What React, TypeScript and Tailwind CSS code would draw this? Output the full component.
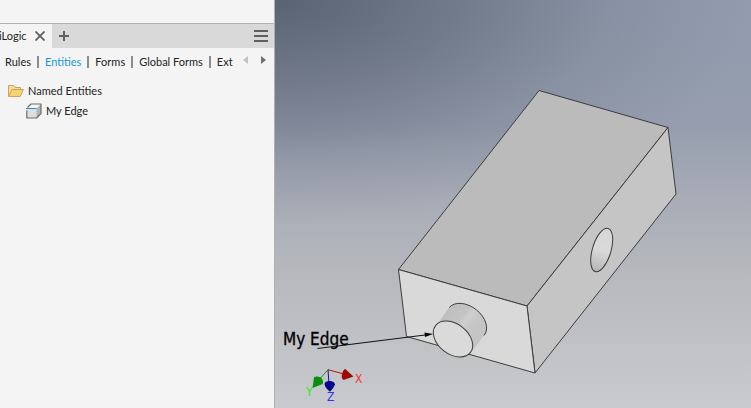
import { Fragment } from "react"

const pages = ["Rules", "Entities", "Forms", "Global Forms", "Ext"]

function FolderIcon() {
  return (
    <svg width="16" height="14" viewBox="0 0 16 14" aria-hidden="true">
      <path d="M.5 12.5V1.5h5l1.5 2h5.5v2" fill="#f3dc9b" stroke="#c9a75a" />
      <path d="M.7 12.5 4 5.5h11.4l-3.2 7z" fill="#f5d272" stroke="#c9a75a" strokeLinejoin="round" />
    </svg>
  )
}

function EdgeIcon() {
  return (
    <svg width="16" height="16" viewBox="0 0 16 16" aria-hidden="true">
      <path d="M.8 5.5 5 1h10l-4.500 4.500z" fill="#f4f4f4" />
      <path d="M.8 5.5h9.700v9.500H.8z" fill="#dedede" />
      <path d="M10.500 5.500 15 1v9.500L10.500 15z" fill="#b4b4b4" />
      <path
        d="M.8 7.500V15h9.700L15 10.500V1H5L1.500 4.500"
        fill="none"
        stroke="#6c6c6c"
        strokeWidth="1.200"
        strokeLinejoin="round"
      />
      <path d="M0 5.500h10.500" stroke="#1f93d6" />
    </svg>
  )
}

function BrowserPanel() {
  return (
    <aside className="w-[275px] shrink-0 border-r border-[#b0b0b0] bg-[#f4f4f4] pt-[23px]">
      {/* Dock tabs */}
      <div className="flex h-[25px] items-stretch border-t border-[#b4b4b4] bg-[#d9d9d9]">
        <div className="flex w-[52px] items-center justify-between bg-[#f4f4f4] pr-[7px]">
          <button className="-ml-px">iLogic</button>
          <button aria-label="Close">
            <svg width="10" height="10" viewBox="0 0 10 10">
              <path d="m.5.5 9 9M9.500.5l-9 9" stroke="#606060" strokeWidth="1.800" />
            </svg>
          </button>
        </div>
        <button aria-label="Add tab" className="px-[7px]">
          <svg width="10" height="10" viewBox="0 0 10 10">
            <path d="M5 0v10M0 5h10" stroke="#606060" strokeWidth="2" />
          </svg>
        </button>
        <button aria-label="Menu" className="ml-auto px-[6px]">
          <svg width="14" height="12" viewBox="0 0 14 12">
            <path d="M0 1h14M0 6h14M0 11h14" stroke="#606060" strokeWidth="2" />
          </svg>
        </button>
      </div>

      {/* Page switcher */}
      <nav className="flex h-7 items-center gap-1.5 pl-[5px] whitespace-nowrap">
        {pages.map((page, i) => (
          <Fragment key={page}>
            {i > 0 && <span className="h-3 w-[2px] shrink-0 bg-[#8c8c8c]" />}
            <button className={page === "Entities" ? "text-[#1a96dc]" : ""}>{page}</button>
          </Fragment>
        ))}
        <div className="mb-1 ml-auto flex gap-[13px] pr-2">
          <button aria-label="Scroll left">
            <svg width="5" height="8" viewBox="0 0 5 8">
              <path d="M5 0v8L0 4z" fill="#c2c2c2" />
            </svg>
          </button>
          <button aria-label="Scroll right">
            <svg width="5" height="8" viewBox="0 0 5 8">
              <path d="M0 0v8l5-4z" fill="#707070" />
            </svg>
          </button>
        </div>
      </nav>

      {/* Entity tree */}
      <ul className="pt-[5px]">
        <li>
          <div className="flex h-5 items-center gap-1 pl-2">
            <FolderIcon />
            Named Entities
          </div>
          <ul>
            <li className="flex h-5 items-center gap-1 pl-[26px]">
              <EdgeIcon />
              My Edge
            </li>
          </ul>
        </li>
      </ul>
    </aside>
  )
}

function Model() {
  return (
    <svg viewBox="0 0 476 408" className="block w-full font-['DejaVu_Sans_Condensed','DejaVu_Sans',sans-serif]">
      <defs>
        <linearGradient id="boss" gradientUnits="userSpaceOnUse" x1="168" y1="312" x2="204" y2="340">
          <stop offset="0" stopColor="#bdbdbd" />
          <stop offset="0.400" stopColor="#c4c4c4" />
          <stop offset="0.500" stopColor="#cfcfcf" />
          <stop offset="0.700" stopColor="#c6c6c6" />
          <stop offset="1" stopColor="#c4c4c4" />
        </linearGradient>
        <linearGradient id="hole" x1="0" y1="0" x2="0" y2="1">
          <stop offset="0" stopColor="#d6d6d6" />
          <stop offset="0.500" stopColor="#dadada" />
          <stop offset="1" stopColor="#b4b4b4" />
        </linearGradient>
      </defs>

      {/* Block */}
      <g stroke="#3c3c3c" strokeWidth="1" strokeLinejoin="round">
        <path d="M264 90.500 393 127.500 252 306 123.500 269.500z" fill="#bbb" />
        <path d="M393 127.500 401 194 260 373 252 306z" fill="#c5c5c5" />
        <path d="M123.500 269.500 252 306 260 373 131.500 336.500z" fill="#d9d9d9" />
        <ellipse cx="326.700" cy="250" rx="9.300" ry="22.500" transform="rotate(16.600 326.700 250)" fill="url(#hole)" />
      </g>

      {/* Boss */}
      <path d="M161 326 174.300 307.500A22 15 37.600 0 1 209 335.500L195.500 353.500z" fill="url(#boss)" />
      <path d="M174.300 307.500A22 15 37.600 0 1 209 335.500" fill="none" stroke="#3c3c3c" />
      <ellipse cx="178" cy="339" rx="22" ry="15" transform="rotate(37.600 178 339)" fill="#dadada" stroke="#3c3c3c" />

      {/* Leader */}
      <path d="M42.500 348.500 150 335" stroke="#111" />
      <path d="M158 334 149.500 332.500 150 337z" fill="#000" />
      <text x="8" y="345" fontSize="17" fill="#000" stroke="#000" strokeWidth="0.300">
        My Edge
      </text>

      {/* Axis triad */}
      <path d="M53 369.700 69 374" stroke="#c01010" />
      <path d="M53 369.700 43 381" stroke="#10a010" />
      <path d="M53 369.700 54 384" stroke="#1010b0" />
      <path d="M70 368.700 78.500 376.500 68.500 380Q66 378.500 67 374 68 370 70 368.700z" fill="#a00808" />
      <path d="M39 377.300Q41 375.500 45.500 377.300 49 380.500 47.700 384L37.500 388z" fill="#0a900f" />
      <path d="M49.500 384Q50 381 54.500 381 59.500 381 60 384.500 59 388 55 391.700 50 388 49.500 384z" fill="#06068f" />
      <g fontSize="12">
        <text x="80" y="382.500" fill="#f33">X</text>
        <text x="31" y="396" fill="#2e2">Y</text>
        <text x="52" y="401" fill="#33f">Z</text>
      </g>
    </svg>
  )
}

export default function App() {
  return (
    <div className="flex min-h-screen font-[Lato,sans-serif] text-[11px] leading-[14px] text-[#222]">
      <BrowserPanel />
      <main className="min-w-0 flex-1 bg-[radial-gradient(ellipse_100%_55%_at_0%_0%,rgba(68,76,92,0.72),rgba(68,76,92,0.42)_38%,rgba(68,76,92,0.14)_70%,transparent),linear-gradient(#929cae,#959dae_30%,#a9adb7_50%,#b9babf_70%,#c9cacd)]">
        <Model />
      </main>
    </div>
  )
}
